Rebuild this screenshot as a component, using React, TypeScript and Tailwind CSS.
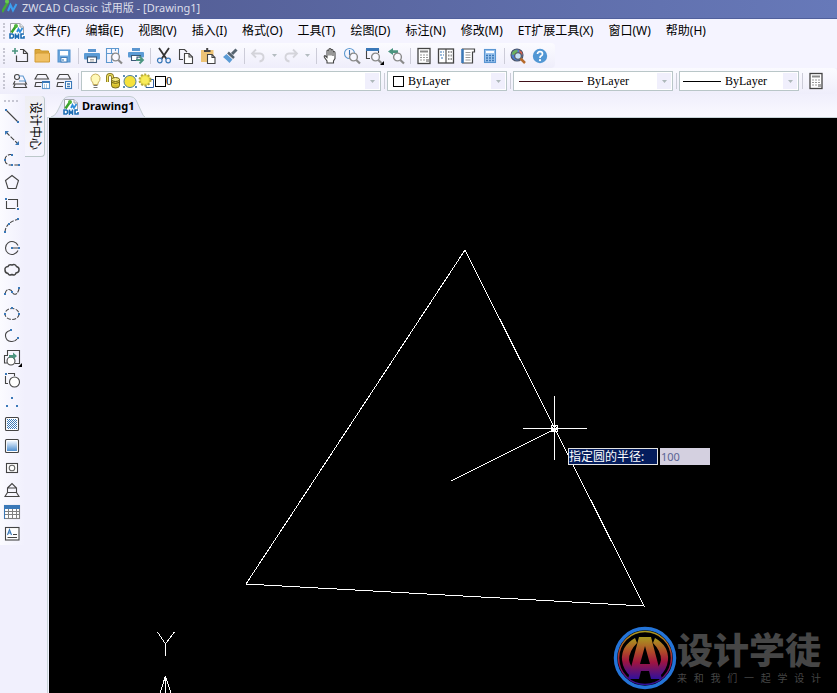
import React, { useState } from "react"

interface Tool {
  label: string
  icon: React.ReactNode
}

const DARK = "#444444"
const BLUE = "#3a78b8"
const GREEN = "#4b9580"

function Icon({ children }: { children: React.ReactNode }) {
  return (
    <svg width="16" height="16" viewBox="0 0 16 16" fill="none" stroke={DARK} strokeWidth="1.1" className="block overflow-visible" aria-hidden="true">
      {children}
    </svg>
  )
}

function Dot({ x, y }: { x: number; y: number }) {
  return <rect x={x - 1} y={y - 1} width="2" height="2" fill={BLUE} stroke="none" />
}

function Magnifier() {
  return (
    <>
      <circle cx="9.5" cy="9" r="3.9" stroke="#8a8a8a" strokeWidth="1.4" fill="#f8f8ff" />
      <path d="M12.3 12L16 15.5" stroke="#8a8a8a" strokeWidth="2.2" />
    </>
  )
}

function Sheet({ accent }: { accent?: boolean }) {
  if (accent) {
    return (
      <g>
        <rect x="2.5" y="1.5" width="11" height="13" stroke="#5b96d2" fill="#9cc4ee" />
        <path d="M4 4h8" stroke="#fff" strokeWidth="2" />
        <path d="M4 7.500h8M4 10h8M4 12.500h8" stroke={BLUE} strokeWidth="1.300" strokeDasharray="2 1" />
      </g>
    )
  }
  return (
    <g>
      <rect x="2" y=".5" width="12" height="15" fill="#fff" strokeWidth="1.300" />
      <path d="M4 3.500h8" stroke="#8a8a8a" strokeWidth="2" />
      <path d="M4 7h8M4 9.500h8M4 12h5" stroke="#999" strokeWidth="1" strokeDasharray="2 1" />
      <rect x="10" y="11" width="3" height="3" fill="#aaa" stroke="none" />
    </g>
  )
}

const fileTools: Tool[] = [
  {
    label: "新建",
    icon: (
      <Icon>
        <path d="M0 3h6M3 0v6" stroke={GREEN} strokeWidth="1.600" />
        <path d="M8 1.500h3.500L15.500 5.500V13.500H4.500V7.500M11.500 1.500V5.500H15.500" strokeWidth="1.200" />
      </Icon>
    ),
  },
  {
    label: "打开",
    icon: (
      <Icon>
        <path d="M1 1.500H6L7.500 3H14.500V6H1Z" fill="#dca83c" stroke="#c8952c" strokeWidth="1" />
        <path d="M1 14V6L3 5H15.500V14Z" fill="#f0c064" stroke="#d29c34" strokeWidth="1" />
      </Icon>
    ),
  },
  {
    label: "保存",
    icon: (
      <Icon>
        <rect x="2" y="2" width="12" height="12" fill="#6aa7dc" stroke="#5290cc" strokeWidth="1" />
        <rect x="4" y="3" width="8" height="4.500" fill="#fff" stroke="none" />
        <rect x="5" y="9.500" width="6" height="4.500" fill="#fff" stroke="#447fba" strokeWidth="1" />
        <path d="M7 11v2" stroke={BLUE} />
      </Icon>
    ),
  },
]

const printTools: Tool[] = [
  {
    label: "打印",
    icon: (
      <Icon>
        <rect x="4" y="1" width="8" height="3" fill="#5b96cf" stroke="none" />
        <rect x="0" y="5" width="16" height="6.500" rx="1" fill="#5b9bd5" stroke="none" />
        <rect x="3.500" y="9" width="9" height="5.500" fill="#fff" stroke="#3c5878" />
        <path d="M6 11.500h4M6 13h4" stroke="#888" strokeWidth=".7" />
      </Icon>
    ),
  },
  {
    label: "打印预览",
    icon: (
      <Icon>
        <path d="M7 14.500H.500V.500H12.500V6M.500 5.500H8M5.500 .500V5.500M5.500 8v6M9.500 .500V3" stroke="#5d98cf" />
        <Magnifier />
      </Icon>
    ),
  },
  {
    label: "发布",
    icon: (
      <Icon>
        <rect x="4" y="0" width="8" height="3" fill="#5b96cf" stroke="none" />
        <rect x="0" y="4" width="16" height="5.500" rx="1" fill="#5b9bd5" stroke="none" />
        <path d="M3.500 7.500H12.500V9H9V12.500H3.500Z" fill="#fff" stroke="#3c5878" />
        <path d="M8 12h7M11.500 8.500L15 12L11.500 15.500" stroke={GREEN} strokeWidth="1.800" />
      </Icon>
    ),
  },
]

const editTools: Tool[] = [
  {
    label: "剪切",
    icon: (
      <Icon>
        <path d="M3 0L10.500 11M13 0L5.500 11" stroke="#333" strokeWidth="1.800" />
        <circle cx="3.800" cy="12.500" r="2.300" stroke={BLUE} strokeWidth="1.200" />
        <circle cx="12.200" cy="12.500" r="2.300" stroke={BLUE} strokeWidth="1.200" />
      </Icon>
    ),
  },
  {
    label: "复制",
    icon: (
      <Icon>
        <path d="M5 11.500H1.500V1.500H6.500L9 4" />
        <path d="M6.500 5.500H11L14.500 9V15.500H6.500Z" fill="#fff" />
        <path d="M11 5.500V9H14.500" />
      </Icon>
    ),
  },
  {
    label: "粘贴",
    icon: (
      <Icon>
        <rect x="1" y="2" width="12.500" height="12" fill="#edc375" stroke="none" />
        <path d="M4 3h6.500M7.200 0v3" stroke="#444" strokeWidth="2" />
        <path d="M7.500 6.500H12L15 9.500V15.500H7.500Z" fill="#fff" />
        <path d="M12 6.500V9.500H15" />
      </Icon>
    ),
  },
  {
    label: "特性匹配",
    icon: (
      <Icon>
        <path d="M14.500 1.500L10 6" stroke="#566470" strokeWidth="3" />
        <path d="M6 4.500L12 10" stroke="#566470" strokeWidth="2.500" />
        <path d="M4.500 6L10.500 11.500L7.500 15L4.500 12L1 9Z" fill="#5b9bd5" stroke="none" />
      </Icon>
    ),
  },
]

const viewTools: Tool[] = [
  {
    label: "实时平移",
    icon: (
      <Icon>
        <path d="M5 15V13L2.500 9.500Q1.800 7.800 3 7.500L5 9.500V3.200Q5 2 6 2T7 3.200V7.500V1.700Q7 .500 8 .500T9 1.700V7.500V2.700Q9 1.500 10 1.500T11 2.700V8V4.500Q11 3.500 12 3.500T13 4.700V10.500L11.500 13V15Z" fill="#fff" />
      </Icon>
    ),
  },
  {
    label: "实时缩放",
    icon: (
      <Icon>
        <circle cx="5.500" cy="5.500" r="5" stroke="#5d98cf" />
        <path d="M5.500 2V6.500H9" stroke={BLUE} />
        <Magnifier />
      </Icon>
    ),
  },
  {
    label: "窗口缩放",
    icon: (
      <Icon>
        <path d="M4 10.500H.500V1.500H12.500V5" />
        <path d="M0 1.500h13" stroke={BLUE} strokeWidth="3" />
        <Magnifier />
        <path d="M18 13v4h-4z" fill="#000" stroke="none" />
      </Icon>
    ),
  },
  {
    label: "缩放上一个",
    icon: (
      <Icon>
        <path d="M0 3.500L5 0V2.200H10V5H5V7Z" fill={GREEN} stroke="none" />
        <Magnifier />
      </Icon>
    ),
  },
]

const paletteTools: Tool[] = [
  { label: "特性", icon: <Icon><Sheet /></Icon> },
  {
    label: "设计中心",
    icon: (
      <Icon>
        <rect x=".5" y="1" width="15" height="14" fill="#fff" strokeWidth="1.300" />
        <path d="M8 1v14" />
        <path d="M2 4h4M2 7h4M3 10h3" stroke={BLUE} strokeDasharray="2 1" />
        <path d="M10 4h4M10 7.500h4M10 11h4" stroke="#999" strokeWidth="2" strokeDasharray="1.500 1" />
      </Icon>
    ),
  },
  {
    label: "工具选项板",
    icon: (
      <Icon>
        <path d="M2.500 1H14.500V4H12.500V15H2.500Z" fill="#fff" strokeWidth="1.200" />
        <path d="M2.500 1V15" stroke={BLUE} strokeWidth="2.500" />
        <path d="M5.500 4.500h5M5.500 7h5M5.500 9.500h5M5.500 12h5" stroke="#999" strokeWidth="1" />
      </Icon>
    ),
  },
  { label: "计算器", icon: <Icon><Sheet accent /></Icon> },
]

const helpTools: Tool[] = [
  {
    label: "在线搜索",
    icon: (
      <Icon>
        <circle cx="7" cy="7" r="6" fill="#4c7cd0" stroke="#4a5468" />
        <path d="M2.500 4Q5 1 8 2.500L6 6L2 7Z" fill="#6cb35a" stroke="none" />
        <path d="M9 2L12 4L12.500 7L10 6Z" fill="#d8604c" stroke="none" />
        <circle cx="8" cy="8" r="3.300" fill="#c4e0f6" stroke="#555" />
        <path d="M10.500 10.500L15 15" stroke="#b66a2c" strokeWidth="2.500" />
      </Icon>
    ),
  },
  {
    label: "帮助",
    icon: (
      <Icon>
        <circle cx="8" cy="8" r="7.200" fill="#5297d4" stroke="none" />
        <path d="M5.500 6Q5.500 3.700 8 3.700T10.500 6Q10.500 7.200 9 8Q8 8.600 8 10" stroke="#fff" strokeWidth="1.700" />
        <circle cx="8" cy="12.200" r="1.100" fill="#fff" stroke="none" />
      </Icon>
    ),
  },
]

const layerTools: Tool[] = [
  {
    label: "图层管理",
    icon: (
      <Icon>
        <path d="M3 8L1.500 11H14.500L13 8M1.500 14.500H14.500L13 11.500M3 11.500L1.500 14.500" />
        <circle cx="5" cy="4" r="2.500" />
        <path d="M7 3H11L13.500 8H7" stroke="#5d98cf" />
      </Icon>
    ),
  },
  {
    label: "图层状态",
    icon: (
      <Icon>
        <path d="M3.500 1.500H12L14.500 6H1ZM2 9.500H8M2 9L1 13.500H7" />
        <rect x="8.500" y="8.500" width="7" height="7" fill="#fff" stroke="#5d98cf" />
        <path d="M8 9h8" stroke={BLUE} strokeWidth="2" />
        <path d="M10 12h4M10 14h4" stroke={BLUE} strokeWidth=".8" strokeDasharray="1 1" />
      </Icon>
    ),
  },
  {
    label: "上一个图层",
    icon: (
      <Icon>
        <path d="M3.500 1.500H12L14.500 6H1ZM2 9.500H8M2 9L1 13.500H7" />
        <rect x="9.500" y="8.500" width="6" height="7" fill="#fff" stroke={BLUE} />
        <path d="M11 11h3M11 13.500h3" stroke={BLUE} strokeWidth="1.600" />
      </Icon>
    ),
  },
]

const drawTools: Tool[] = [
  { label: "直线", icon: <Icon><path d="M2 2L14 14" /><Dot x={2} y={2} /><Dot x={14} y={14} /></Icon> },
  {
    label: "构造线",
    icon: (
      <Icon>
        <path d="M2 2L14 14" strokeDasharray="5 1.500" />
        <path d="M1 1H5L1 5ZM15 15H11L15 11Z" fill={BLUE} stroke="none" />
      </Icon>
    ),
  },
  {
    label: "多段线",
    icon: (
      <Icon>
        <path d="M8 2.500H6Q1 3.500 1 8Q1 12 6 13H15" strokeDasharray="4 1.500" />
        <Dot x={8} y={3} /><Dot x={1} y={8} /><Dot x={8} y={13} /><Dot x={15} y={13} />
      </Icon>
    ),
  },
  { label: "正多边形", icon: <Icon><path d="M8 1.500L14.500 6.500L12 14.500H4L1.500 6.500Z" /></Icon> },
  { label: "矩形", icon: <Icon><path d="M4 3.500H13.500V11M11.500 12.500H2.500V5" /><Dot x={2} y={3} /><Dot x={14} y={13} /></Icon> },
  { label: "圆弧", icon: <Icon><path d="M1 14Q2 4 14 1.500" strokeDasharray="4 1.500" /><Dot x={1} y={14} /><Dot x={5} y={6} /><Dot x={14} y={1} /></Icon> },
  { label: "圆", icon: <Icon><path d="M14 5.500A6.500 6.500 0 1 0 14 10.500M9 8H14" /><Dot x={8} y={8} /><Dot x={15} y={8} /></Icon> },
  {
    label: "修订云线",
    icon: (
      <Icon>
        <path d="M4 4.500Q5 2 8 3Q11 1.500 12.500 4.500Q15.500 5.500 15 8Q15 10.500 12 11Q11 14 8 12.500Q5 14 4 11.500Q1 11 1 8Q.500 5 4 4.500Z" strokeWidth="1.500" />
      </Icon>
    ),
  },
  { label: "样条曲线", icon: <Icon><path d="M1 10Q2 5 5 5.500T8 8.500Q10 11 12 10T15 5" strokeDasharray="5 1" /><Dot x={1} y={10} /><Dot x={8} y={8} /><Dot x={15} y={4} /></Icon> },
  { label: "椭圆", icon: <Icon><ellipse cx="8" cy="8" rx="7" ry="5.500" strokeDasharray="4 1.500" /><Dot x={8} y={2} /><Dot x={1} y={8} /><Dot x={15} y={8} /></Icon> },
  { label: "椭圆弧", icon: <Icon><path d="M6 2.500Q1 4 1.500 8Q2 13 7 13.500Q11 14 13 11" /><Dot x={7} y={2} /><Dot x={14} y={10} /></Icon> },
  {
    label: "插入块",
    icon: (
      <Icon>
        <path d="M3.500 5V.500H15.500V13.500H11M4 5.500H.500V13H3" />
        <circle cx="7" cy="11" r="4" fill="#fff" />
        <path d="M5 5H9V2.500L13 6L9 9.500V7.500H5Z" fill={GREEN} stroke="none" />
        <path d="M18 13v4h-4z" fill="#000" stroke="none" />
      </Icon>
    ),
  },
  { label: "创建块", icon: <Icon><path d="M4 1.500H10.500V4M1.500 4V11.500H4" /><circle cx="10.500" cy="10" r="5" fill="#fff" /><Dot x={2} y={2} /></Icon> },
  { label: "点", icon: <Icon><Dot x={8} y={4} /><Dot x={3} y={12} /><Dot x={13} y={12} /></Icon> },
  {
    label: "图案填充",
    icon: (
      <Icon>
        <defs>
          <pattern id="hatch" width="2" height="2" patternUnits="userSpaceOnUse">
            <path d="M0 0h1v1H0zM1 1h1v1H1z" fill="#3a78b8" stroke="none" />
          </pattern>
        </defs>
        <rect x="1.500" y="1.500" width="13" height="13" rx="1" fill="#fff" />
        <rect x="3" y="3" width="10" height="10" fill="url(#hatch)" stroke="none" />
      </Icon>
    ),
  },
  {
    label: "渐变色",
    icon: (
      <Icon>
        <defs>
          <linearGradient id="shade" x1="0" y1="0" x2="0" y2="1">
            <stop offset="0" stopColor="#eef6ff" />
            <stop offset="1" stopColor="#4f8fd0" />
          </linearGradient>
        </defs>
        <rect x="1.500" y="1.500" width="13" height="13" rx="1" fill="#fff" />
        <rect x="3" y="3" width="10" height="10" fill="url(#shade)" stroke="none" />
      </Icon>
    ),
  },
  { label: "面域", icon: <Icon><rect x="2.500" y="3.500" width="11" height="9" fill="#fff" /><circle cx="8" cy="8" r="2.800" stroke="#666" /></Icon> },
  { label: "区域覆盖", icon: <Icon><path d="M3.500 6L8 1.500L12.500 6V10.500H3.500ZM3.500 6H12.500M3.500 10.500L1 14.500H15L12.500 10.500" /></Icon> },
  {
    label: "表格",
    icon: (
      <Icon>
        <rect x=".5" y="1.500" width="15" height="13" fill="#fff" stroke="#808080" />
        <path d="M.500 7.500H15.500M.500 10.500H15.500M4.500 4V14.500M8.500 4V14.500M12.500 4V14.500" stroke="#808080" strokeWidth="1" />
        <path d="M0 3H16" stroke={BLUE} strokeWidth="4" />
        <path d="M.500 3V15" stroke={BLUE} strokeWidth="1" />
      </Icon>
    ),
  },
  {
    label: "多行文字",
    icon: (
      <Icon>
        <rect x="1.500" y="1.500" width="13.500" height="12.500" fill="#fff" />
        <path d="M3.500 9L5.500 3.500L7.500 9M4.500 7H6.500" stroke={BLUE} />
        <path d="M9 8.500H13M3.500 11.500H13" strokeWidth="1" />
      </Icon>
    ),
  },
]

const menus = ["文件(F)", "编辑(E)", "视图(V)", "插入(I)", "格式(O)", "工具(T)", "绘图(D)", "标注(N)", "修改(M)", "ET扩展工具(X)", "窗口(W)", "帮助(H)"]

function ToolButton({ label, icon }: Tool) {
  return (
    <button type="button" aria-label={label} title={label} className="flex h-[22px] w-[22px] shrink-0 items-center justify-center hover:bg-[#dcdcf4]">
      {icon}
    </button>
  )
}

function Group({ tools }: { tools: Tool[] }) {
  return (
    <div className="flex">
      {tools.map((t) => <ToolButton key={t.label} {...t} />)}
    </div>
  )
}

function Sep() {
  return (
    <div className="flex w-[6px] shrink-0 justify-center">
      <div className="h-4 w-px bg-[#ccccd8]" />
    </div>
  )
}

function Grip() {
  return <div className="mx-[3px] h-4 w-[3px] shrink-0 border-l-2 border-dotted border-[#c6c6d2]" />
}

function HistoryButton({ label, flip }: { label: string; flip?: boolean }) {
  return (
    <div className="flex">
      <ToolButton
        label={label}
        icon={
          <Icon>
            <g transform={flip ? "translate(16 0) scale(-1 1)" : undefined} stroke="#d4d4da" strokeWidth="1.800">
              <path d="M6 1.500L2 5.500L6 9.500M2 5.500H10Q14 6 13.500 10Q13 13 9.500 13.500" />
            </g>
          </Icon>
        }
      />
      <button type="button" aria-label={label + "列表"} className="flex w-[11px] items-center justify-center">
        <svg width="5" height="3" viewBox="0 0 5 3" aria-hidden="true"><path d="M0 0H5L2.500 3Z" fill="#b4bcc0" /></svg>
      </button>
    </div>
  )
}

function DwgIcon() {
  return (
    <svg width="16" height="16" viewBox="0 0 16 16" className="shrink-0" aria-hidden="true">
      <path d="M1.500 .500H11L14.500 4V15.500H1.500Z" fill="#fff" stroke="#a0a4aa" />
      <path d="M11 .500V4H14.500" fill="#e4e8ee" stroke="#a0a4aa" />
      <path d="M2.500 9.500L7 3" stroke="#38a02c" strokeWidth="2.500" />
      <circle cx="7" cy="3" r="2" fill="#4eb43c" />
      <path d="M8 9L9.500 6L11 9L13.500 5" stroke="#2d8cdc" strokeWidth="1.800" fill="none" />
      <path d="M0 10H16V16H0Z" fill="#fff" />
      <path d="M1 11V15H3.500L4.500 14V12L3.500 11ZM6.500 10.500V15L8 13L9.500 15V10.500M15 11H12V15H15V13" fill="none" stroke="#1c6cb4" strokeWidth="1.600" />
    </svg>
  )
}

interface ComboProps {
  label: string
  width: string
  options: string[]
  children: React.ReactNode
}

function Combo({ label, width, options, children }: ComboProps) {
  const [value, setValue] = useState(options[0])
  return (
    <div className={"flex h-[20px] min-w-0 items-center border border-[#b9c6c8] bg-white p-px " + width}>
      {children}
      <select
        aria-label={label}
        value={value}
        onChange={(e) => setValue(e.target.value)}
        className="h-full min-w-0 flex-1 appearance-none bg-transparent font-['Liberation_Serif','Noto_Sans_CJK_SC',serif] text-[12px] leading-4 text-black outline-none"
      >
        {options.map((o) => <option key={o}>{o}</option>)}
      </select>
      <div className="flex h-full w-[14px] shrink-0 items-center justify-center bg-[#f0effc]">
        <svg width="5" height="3" viewBox="0 0 5 3" aria-hidden="true"><path d="M0 0H5L2.500 3Z" fill="#adb8ba" /></svg>
      </div>
    </div>
  )
}

function LayerFlags() {
  return (
    <div className="flex shrink-0 items-center pl-1">
      <svg width="18" height="16" viewBox="0 0 18 16" aria-hidden="true">
        <path d="M6 10Q3.500 7.500 4 4.500Q5 1 8.500 1T13 4.500Q13.500 7.500 11 10V11.500H6Z" fill="#fff9b8" stroke="#c8b060" />
        <path d="M6.500 12.500H10.500M6.500 14.500H10.500" stroke="#777" />
      </svg>
      <svg width="16" height="16" viewBox="0 0 16 16" fill="none" aria-hidden="true">
        <path d="M2.500 9V4Q2.500 1.500 5 1.500T7.500 4V6" stroke="#8a7a20" strokeWidth="3" />
        <path d="M2.500 9V4Q2.500 1.500 5 1.500T7.500 4V6" stroke="#f2e468" strokeWidth="1.200" />
        <ellipse cx="10.500" cy="12.500" rx="4" ry="2.500" fill="#d4bc2c" stroke="#75681c" />
        <path d="M6.500 6V12H14.500V6Z" fill="#e2cc3c" />
        <path d="M6.500 6V12M14.500 6V12M7 9.500Q10.500 11.500 14 9.500" stroke="#75681c" />
        <ellipse cx="10.500" cy="6.500" rx="4" ry="2" fill="#f6ea80" stroke="#75681c" />
      </svg>
      <svg width="17" height="16" viewBox="0 0 17 16" aria-hidden="true">
        <path d="M2 2H4V4H2ZM14 2H16V4H14ZM2 13H4V15H2ZM14 13H16V15H14Z" fill="#5c8cb4" />
        <circle cx="9" cy="8.500" r="6" fill="#f6e23c" stroke="#4c7c9c" />
      </svg>
      <svg width="17" height="16" viewBox="0 0 17 16" aria-hidden="true">
        <path d="M12 6.500H15.500V14.500H8V12" fill="#fff" stroke="#2c5ca0" />
        <circle cx="7" cy="7" r="5.500" fill="#eee04c" stroke="#b4a840" strokeWidth="2" strokeDasharray="2 1.500" />
        <circle cx="7" cy="7" r="3.500" fill="#f8ec5c" />
      </svg>
      <div className="h-[11px] w-[11px] border border-black bg-white" />
    </div>
  )
}

function Watermark() {
  return (
    <div className="absolute right-4 bottom-[3px] flex items-center">
      <svg width="64" height="64" viewBox="0 0 64 64" aria-hidden="true">
        <defs>
          <linearGradient id="logo" x1="0" y1="0" x2="0" y2="1">
            <stop offset="0" stopColor="#a89a20" />
            <stop offset=".35" stopColor="#b04a28" />
            <stop offset=".6" stopColor="#a01440" />
            <stop offset="1" stopColor="#30109c" />
          </linearGradient>
        </defs>
        <circle cx="32" cy="32" r="29.500" fill="#000" stroke="#2474d8" strokeWidth="3.500" />
        <circle cx="32" cy="32" r="26.500" fill="none" stroke="url(#logo)" strokeWidth="1.500" />
        <path d="M22 12Q8 20 9 34Q10 44 18 51L22 44Q17 40 16 34Q16 25 24 17ZM42 12Q56 20 55 34Q54 44 46 51L42 44Q47 40 48 34Q48 25 40 17Z" fill="url(#logo)" />
        <path fillRule="evenodd" d="M26 11H38L49 53H38L36 45H28L26 53H15ZM32 20L27 38H37Z" fill="url(#logo)" />
      </svg>
      <div className="w-[144px] text-[#464646]">
        <div className="font-['Noto_Sans_CJK_SC',sans-serif] text-[36px] leading-9 font-black">设计学徒</div>
        <div className="mt-1 flex justify-between font-['Noto_Sans_CJK_SC',sans-serif] text-[10px] leading-4">
          {"来和我们一起学设计".split("").map((c, i) => <span key={i}>{c}</span>)}
        </div>
      </div>
    </div>
  )
}

function Drawing() {
  const [radius, setRadius] = useState("100")
  return (
    <main className="relative min-h-0 flex-1 overflow-hidden bg-black">
      <svg className="absolute inset-0 h-full w-full" fill="none" stroke="#fff" shapeRendering="crispEdges" aria-hidden="true">
        <path d="M416 132L197 466L595 488Z" />
        <path d="M402 363L506 311" />
        <path d="M474 310.500H538M505.500 278V342" />
        <rect x="502.500" y="307.500" width="6" height="6" />
        <circle cx="505.500" cy="310.500" r="2" />
        <path d="M108.500 514L116.500 526L125.500 514M116.500 526V538" />
        <path d="M116.500 558L110 578M116.500 558L123 578M116.500 558V578" />
      </svg>
      <div className="absolute top-[330px] left-[519px] flex gap-[2px] leading-4">
        <label htmlFor="radius" className="h-[17px] w-[90px] border border-[#e4e4e4] bg-[#041c5c] whitespace-nowrap text-white">
          指定圆的半径:
        </label>
        <input
          id="radius"
          value={radius}
          onChange={(e) => setRadius(e.target.value)}
          className="h-[17px] w-[50px] bg-[#d4d0e0] px-px text-[11px] text-[#5a6494] outline-none"
        />
      </div>
      <Watermark />
    </main>
  )
}

export default function App() {
  return (
    <div className="flex h-screen flex-col overflow-hidden bg-[#f1f0fd] font-['Noto_Sans','Noto_Sans_CJK_SC',sans-serif] text-[12px] text-black">
      {/* Title bar */}
      <header className="flex h-[19px] shrink-0 items-start gap-1 border-b border-[#50609c] bg-linear-to-r from-[#50598f] to-[#6779b9] pl-[2px]">
        <svg width="16" height="14" viewBox="0 0 16 14" fill="none" aria-hidden="true">
          <path d="M0 12L6 2" stroke="#46a838" strokeWidth="2.500" />
          <circle cx="5" cy="1.500" r="2" fill="#64c84c" />
          <path d="M6 11L8.500 5L11 10.500L14.500 4" stroke="#3ca0f0" strokeWidth="2" />
        </svg>
        <h1 className="text-[11px] leading-4 text-[#dcdeea]">ZWCAD Classic 试用版 - [Drawing1]</h1>
      </header>

      {/* Menu bar */}
      <nav className="flex h-6 shrink-0 items-center bg-[#f5f4ff]">
        <Grip />
        <DwgIcon />
        <div className="flex gap-[15px] pl-2">
          {menus.map((m) => (
            <button key={m} type="button" className="leading-5 whitespace-nowrap">{m}</button>
          ))}
        </div>
      </nav>

      {/* Standard toolbar */}
      <div className="flex shrink-0 bg-[#f5f4ff]">
        <div className="flex h-[25px] items-center rounded-r bg-linear-to-b from-[#fbfbff] to-[#efeefb] pr-1">
          <Grip />
          <Group tools={fileTools} />
          <Sep />
          <Group tools={printTools} />
          <Sep />
          <Group tools={editTools} />
          <Sep />
          <HistoryButton label="放弃" />
          <HistoryButton label="重做" flip />
          <Sep />
          <Group tools={viewTools} />
          <Sep />
          <Group tools={paletteTools} />
          <Sep />
          <Group tools={helpTools} />
        </div>
      </div>

      {/* Layer and property toolbar */}
      <div className="flex h-[26px] shrink-0 items-center rounded-r bg-linear-to-b from-[#fbfbff] to-[#efeefb]">
        <Grip />
        <Group tools={layerTools} />
        <Sep />
        <Combo label="图层" width="w-[300px]" options={["0"]}>
          <LayerFlags />
        </Combo>
        <Sep />
        <Combo label="颜色" width="w-[120px]" options={["ByLayer", "ByBlock"]}>
          <div className="mr-1 ml-1 h-[11px] w-[11px] shrink-0 border border-black" />
        </Combo>
        <Sep />
        <Combo label="线型" width="w-[160px]" options={["ByLayer", "ByBlock"]}>
          <div className="mr-1 ml-1 h-px w-[64px] shrink-0 bg-[#401018]" />
        </Combo>
        <Sep />
        <Combo label="线宽" width="w-[120px]" options={["ByLayer", "ByBlock"]}>
          <div className="mr-1 ml-[2px] h-px w-[38px] shrink-0 bg-black" />
        </Combo>
        <Sep />
        <ToolButton label="快速特性" icon={<Icon><Sheet /></Icon>} />
      </div>

      <div className="flex min-h-0 flex-1">
        {/* Draw toolbar */}
        <aside className="flex w-[25px] shrink-0 flex-col items-start self-start bg-linear-to-r from-[#fbfbff] to-[#f1f0fd] pt-[6px]">
          <div className="ml-1 h-[5px] w-[14px] border-t-2 border-dotted border-[#c6c6d2]" />
          <div className="ml-px flex flex-col">
            {drawTools.map((t) => <ToolButton key={t.label} {...t} />)}
          </div>
        </aside>

        <div className="w-[22px] shrink-0 pt-[2px]">
          <button
            type="button"
            className="flex h-[61px] w-5 items-center justify-center rounded-r border-r border-b border-[#bcc8ca] bg-linear-to-b from-[#eeeef2] to-[#f6f5ff] leading-4 [text-orientation:sideways] [writing-mode:vertical-rl]"
          >
            设计中心
          </button>
        </div>

        <section className="flex min-w-0 flex-1 flex-col">
          <div className="flex h-6 shrink-0 items-end border-b border-[#c8d4d8] bg-linear-to-b from-[#f0effc] to-[#faf9ff]">
            <button type="button" className="relative ml-1 flex h-[21px] w-[94px] items-center pl-3 text-[11px] font-bold">
              <svg className="absolute inset-0 h-full w-full" viewBox="0 0 94 21" preserveAspectRatio="none" aria-hidden="true">
                <path d="M0 21Q4 20 6 16L12 4Q14 .500 18 .500H79Q83 .500 85 4L91 17Q92 20 94 21" fill="#e8e8fb" stroke="#c2cdd0" />
              </svg>
              <span className="relative flex items-center gap-[3px]">
                <DwgIcon />
                Drawing1
              </span>
            </button>
          </div>
          <div className="flex min-h-0 flex-1 border-l border-[#c8d4d8] pl-px">
            <Drawing />
          </div>
        </section>
      </div>
    </div>
  )
}
